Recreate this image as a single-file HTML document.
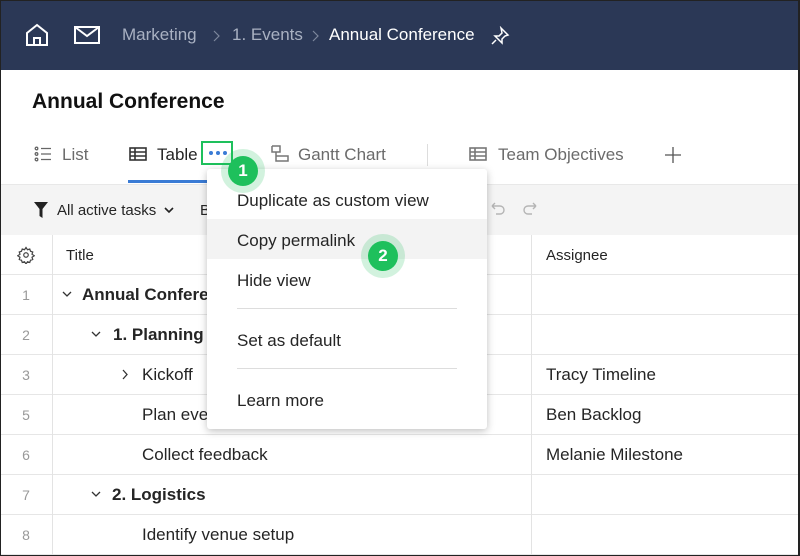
<!DOCTYPE html>
<html><head><meta charset="utf-8"><style>
*{box-sizing:border-box;margin:0;padding:0}
body{width:800px;height:556px;overflow:hidden;font-family:"Liberation Sans",sans-serif;background:#fff;position:relative;color:#252525}
.hdr{position:absolute;left:0;top:0;width:800px;height:70px;background:#2b3856}
.t{position:absolute;white-space:nowrap}
.bc{font-size:17px;top:25px;color:#a9b1c2}
.tab{font-size:17px;top:145px;color:#6b6b6b}
.row{position:absolute;left:0;width:800px;height:40px;border-bottom:1px solid #e6e6e6}
.num{position:absolute;left:0;width:52px;text-align:center;color:#999;font-size:14px;top:12px}
.cell{position:absolute;font-size:17px;top:10px;white-space:nowrap}
.b{font-weight:bold}
.chev{position:absolute;top:16px}
.menu{position:absolute;left:207px;top:169px;width:280px;height:260px;background:#fff;border-radius:3px;box-shadow:0 2px 8px rgba(0,0,0,.25)}
.mi{position:absolute;left:30px;font-size:17px;color:#252525;white-space:nowrap}
.badge{position:absolute;width:30px;height:30px;border-radius:50%;background:#1ec05c;color:#fff;font-weight:bold;font-size:17px;text-align:center;line-height:30px;box-shadow:0 0 0 7px rgba(30,192,92,.2)}
</style></head><body>
<div class="hdr"></div>
<svg class="t" style="left:24px;top:22px" width="26" height="26" viewBox="0 0 26 26" fill="none" stroke="#fff" stroke-width="2"><path d="M3 11L13 3l10 8v12H3z"/><path d="M10 23v-7h6v7"/></svg>
<svg class="t" style="left:74px;top:26px" width="26" height="18" viewBox="0 0 26 18" fill="none" stroke="#fff" stroke-width="2"><rect x="1" y="1" width="24" height="16"/><path d="M1 1l12 9 12-9"/></svg>
<div class="t bc" style="left:122px">Marketing</div>
<svg class="t" style="left:212px;top:30px" width="8" height="12" fill="none" stroke="#7d879c" stroke-width="1.2"><path d="M2 1l5 5-5 5"/></svg>
<div class="t bc" style="left:232px">1. Events</div>
<svg class="t" style="left:311px;top:30px" width="8" height="12" fill="none" stroke="#7d879c" stroke-width="1.2"><path d="M2 1l5 5-5 5"/></svg>
<div class="t bc" style="left:329px;color:#fff">Annual Conference</div>
<svg class="t" style="left:490px;top:26px" width="20" height="20" fill="none" stroke="#fff" stroke-width="1.5"><path d="M11 2l7 7-3 1-3 3v4l-7-7h4l3-3z M6 14l-4 4"/></svg>
<div class="t" style="left:32px;top:90px;font-size:21px;font-weight:bold;color:#111">Annual Conference</div>
<svg class="t" style="left:34px;top:146px" width="18" height="16" fill="none" stroke="#666" stroke-width="1.3"><circle cx="2.5" cy="2.5" r="1.3"/><circle cx="2.5" cy="8" r="1.3"/><circle cx="2.5" cy="13.5" r="1.3"/><path d="M7 2.5h10M7 8h10M7 13.5h10"/></svg>
<div class="t tab" style="left:62px">List</div>
<svg class="t" style="left:129px;top:147px" width="18" height="14" fill="none" stroke="#333" stroke-width="1.6"><rect x="1" y="1" width="16" height="12"/><path d="M1 5h16M1 9h16M6 1v12"/></svg>
<div class="t tab" style="left:157px;color:#252525">Table</div>
<div class="t" style="left:128px;top:180px;width:80px;height:3px;background:#3a7bd5"></div>
<div class="t" style="left:201px;top:141px;width:32px;height:24px;border:2px solid #1ec05c"></div>
<svg class="t" style="left:208px;top:150px" width="20" height="6" fill="#3a7bd5"><circle cx="3" cy="3" r="2"/><circle cx="10" cy="3" r="2"/><circle cx="17" cy="3" r="2"/></svg>
<svg class="t" style="left:270px;top:145px" width="20" height="18" fill="none" stroke="#777" stroke-width="1.5"><path d="M2 1v6h8V1H2M6 7v4h12v5H6v-5"/></svg>
<div class="t tab" style="left:298px">Gantt Chart</div>
<div class="t" style="left:427px;top:144px;width:1px;height:22px;background:#ddd"></div>
<svg class="t" style="left:469px;top:147px" width="18" height="14" fill="none" stroke="#777" stroke-width="1.6"><rect x="1" y="1" width="16" height="12"/><path d="M1 5h16M1 9h16M6 1v12"/></svg>
<div class="t tab" style="left:498px">Team Objectives</div>
<svg class="t" style="left:664px;top:146px" width="18" height="18" fill="none" stroke="#555" stroke-width="1.3"><path d="M9 1v16M1 9h16"/></svg>
<div class="t" style="left:0;top:184px;width:800px;height:51px;background:#f4f4f4;border-top:1px solid #e8e8e8"></div>
<svg class="t" style="left:34px;top:202px" width="14" height="16" fill="#222"><path d="M0 0h14L8.5 7v9L5.5 14V7z"/></svg>
<div class="t" style="left:57px;top:202px;font-size:15px">All active tasks</div>
<svg class="t" style="left:164px;top:207px" width="10" height="7" fill="none" stroke="#222" stroke-width="1.6"><path d="M1 1l4 4 4-4"/></svg>
<div class="t" style="left:200px;top:202px;font-size:15px">B</div>
<svg class="t" style="left:488px;top:201px" width="60" height="18" fill="none" stroke="#b5b5b5" stroke-width="1.4"><path d="M4 5h8a4 4 0 010 8H8M4 5l3-3M4 5l3 3"/><path d="M48 5h-8a4 4 0 000 8h4M48 5l-3-3M48 5l-3 3"/></svg>
<div class="row" style="top:235px;background:#fff">
<svg class="t" style="left:17px;top:11px" width="18" height="18" viewBox="0 0 24 24" fill="none" stroke="#444" stroke-width="1.6"><circle cx="12" cy="12" r="3"/><path d="M12 2l2 3 3-1 1 3 3 1-1 3 3 2-3 2 1 3-3 1-1 3-3-1-2 3-2-3-3 1-1-3-3-1 1-3-3-2 3-2-1-3 3-1 1-3 3 1z"/></svg>
<div class="cell" style="left:66px;font-size:15px;top:12px">Title</div><div class="cell" style="left:546px;font-size:15px;top:12px">Assignee</div></div>
<div class="row" style="top:275px"><div class="num">1</div><svg class="chev" style="left:62px" width="10" height="7" fill="none" stroke="#333" stroke-width="1.3"><path d="M1 1l4 4 4-4"/></svg><div class="cell b" style="left:82px">Annual Conference</div></div>
<div class="row" style="top:315px"><div class="num">2</div><svg class="chev" style="left:91px" width="10" height="7" fill="none" stroke="#333" stroke-width="1.3"><path d="M1 1l4 4 4-4"/></svg><div class="cell b" style="left:113px">1. Planning</div></div>
<div class="row" style="top:355px"><div class="num">3</div><svg class="chev" style="left:122px;top:14px" width="7" height="11" fill="none" stroke="#333" stroke-width="1.3"><path d="M1 1l4 4.5-4 4.5"/></svg><div class="cell" style="left:142px">Kickoff</div><div class="cell" style="left:546px">Tracy Timeline</div></div>
<div class="row" style="top:395px"><div class="num">5</div><div class="cell" style="left:142px">Plan event</div><div class="cell" style="left:546px">Ben Backlog</div></div>
<div class="row" style="top:435px"><div class="num">6</div><div class="cell" style="left:142px">Collect feedback</div><div class="cell" style="left:546px">Melanie Milestone</div></div>
<div class="row" style="top:475px"><div class="num">7</div><svg class="chev" style="left:91px" width="10" height="7" fill="none" stroke="#333" stroke-width="1.3"><path d="M1 1l4 4 4-4"/></svg><div class="cell b" style="left:112px">2. Logistics</div></div>
<div class="row" style="top:515px"><div class="num">8</div><div class="cell" style="left:142px">Identify venue setup</div></div>
<div class="t" style="left:52px;top:235px;width:1px;height:321px;background:#e3e3e3"></div>
<div class="t" style="left:531px;top:235px;width:1px;height:321px;background:#e3e3e3"></div>
<div class="menu">
<div class="t" style="left:0;top:50px;width:280px;height:40px;background:#f3f3f3"></div>
<div class="mi" style="top:22px">Duplicate as custom view</div>
<div class="mi" style="top:62px">Copy permalink</div>
<div class="mi" style="top:102px">Hide view</div>
<div class="t" style="left:30px;top:139px;width:220px;height:1px;background:#ddd"></div>
<div class="mi" style="top:162px">Set as default</div>
<div class="t" style="left:30px;top:199px;width:220px;height:1px;background:#ddd"></div>
<div class="mi" style="top:222px">Learn more</div>
</div>
<div class="badge" style="left:228px;top:156px">1</div>
<div class="badge" style="left:368px;top:241px">2</div>
<div class="t" style="left:0;top:0;width:800px;height:556px;border:1px solid #222;border-right:2px solid #222"></div>
</body></html>
